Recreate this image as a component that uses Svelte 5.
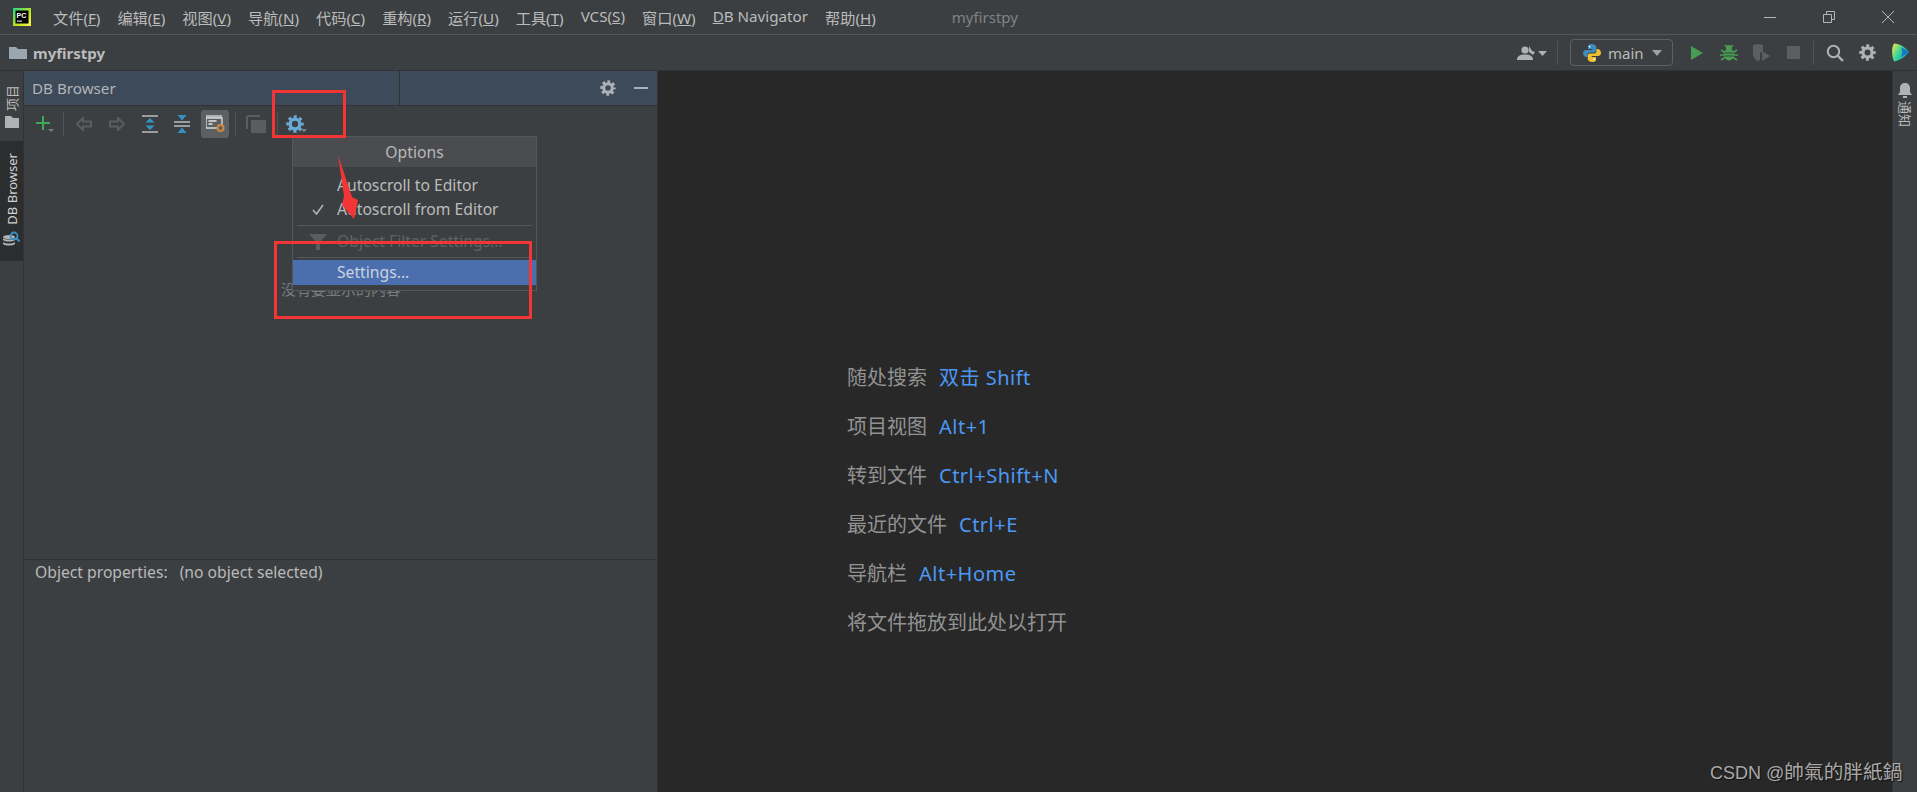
<script lang="ts">
  const menus = [
    ["文件(", "F", ")"],
    ["编辑(", "E", ")"],
    ["视图(", "V", ")"],
    ["导航(", "N", ")"],
    ["代码(", "C", ")"],
    ["重构(", "R", ")"],
    ["运行(", "U", ")"],
    ["工具(", "T", ")"],
    ["VCS(", "S", ")"],
    ["窗口(", "W", ")"],
    ["", "D", "B Navigator"],
    ["帮助(", "H", ")"]
  ];

  const hints = [
    { label: "随处搜索", key: "双击 Shift" },
    { label: "项目视图", key: "Alt+1" },
    { label: "转到文件", key: "Ctrl+Shift+N" },
    { label: "最近的文件", key: "Ctrl+E" },
    { label: "导航栏", key: "Alt+Home" },
    { label: "将文件拖放到此处以打开", key: "" }
  ];
</script>

{#snippet gear(size: number, color: string)}
  <svg class="gear" viewBox="2 2 20 20" width={size} height={size}>
    <circle cx="12" cy="12" r="5.4" fill="none" stroke={color} stroke-width="3.800" />
    <circle cx="12" cy="12" r="8" fill="none" stroke={color} stroke-width="3.400" stroke-dasharray="3.400 2.883" stroke-dashoffset="1.700" />
  </svg>
{/snippet}

<div class="ide">
  <header class="titlebar">
    <svg class="logo" viewBox="0 0 18 18" width="18" height="18">
      <defs>
        <linearGradient id="pc" x1="0" y1="0" x2="1" y2="1">
          <stop offset="0" stop-color="#21d789" />
          <stop offset="0.6" stop-color="#c6e21c" />
          <stop offset="1" stop-color="#fcf84a" />
        </linearGradient>
      </defs>
      <rect width="18" height="18" fill="url(#pc)" />
      <rect x="2.500" y="2.500" width="13" height="13" fill="#000" />
      <text x="3.500" y="9.500" class="logo-text">PC</text>
      <rect x="4" y="12.600" width="5" height="1" fill="#fff" />
    </svg>
    <nav class="menus">
      {#each menus as [a, k, b]}
        <span>{a}<u>{k}</u>{b}</span>
      {/each}
    </nav>
    <span class="wintitle">myfirstpy</span>
    <div class="winctl">
      <svg viewBox="0 0 14 14" width="14" height="14"><path d="M1 7.500h12" stroke="#b5b5b5" fill="none" /></svg>
      <svg viewBox="0 0 14 14" width="14" height="14"><path d="M1.500 4.500h8v8h-8zM4.500 4V1.500h8v8H10" stroke="#b5b5b5" fill="none" /></svg>
      <svg viewBox="0 0 14 14" width="14" height="14"><path d="M1 1l12 12M13 1L1 13" stroke="#b5b5b5" fill="none" /></svg>
    </div>
  </header>

  <div class="navbar">
    <div class="crumb">
      <svg viewBox="0 0 18 16" width="18" height="16"><path d="M0 2h7l2 2h9v10H0z" fill="#9aa7b0" /></svg>
      <strong>myfirstpy</strong>
    </div>
    <div class="nav-actions">
      <svg viewBox="0 0 32 16" width="32" height="16">
        <circle cx="8" cy="5" r="3.600" fill="#afb1b3" />
        <path d="M0 15c0-4 3-5.500 8-5.500s8 1.500 8 5.500z" fill="#afb1b3" />
        <path d="M12 1l3 5 3 1-2 3-4-3z" fill="#afb1b3" />
        <path d="M21 6h9l-4.500 5z" fill="#afb1b3" />
      </svg>
      <i class="vsep s1"></i>
      <div class="runcfg">
        <svg viewBox="0 0 18 18" width="18" height="18">
          <path d="M9 0C5 0 5 2 5 3v2h4.300v1H3C1 6 0 7.500 0 9s1 4 3 4h1.500v-2c0-1.500 1-2.600 2.600-2.600h4c1.300 0 2.200-1 2.200-2.200V3c0-1.500-1.800-3-4.300-3z" fill="#3c8dbc" />
          <path d="M9 18c4 0 4-2 4-3v-2H8.700v-1H15c2 0 3-1.500 3-3s-1-4-3-4h-1.500v2c0 1.500-1 2.600-2.600 2.600h-4C5.600 9.600 4.700 10.600 4.700 11.800V15c0 1.500 1.800 3 4.300 3z" fill="#f0c030" />
          <circle cx="6.700" cy="2.600" r=".9" fill="#fff" />
          <circle cx="11.300" cy="15.400" r=".9" fill="#fff" />
        </svg>
        <span>main</span>
        <svg viewBox="0 0 12 8" width="12" height="8"><path d="M1 1h10L6 7z" fill="#9da0a2" /></svg>
      </div>
      <svg class="run" viewBox="0 0 12 14" width="12" height="14"><path d="M0 0l12 7-12 7z" fill="#499c54" /></svg>
      <svg class="bug" viewBox="0 0 18 18" width="18" height="18">
        <ellipse cx="9" cy="10.500" rx="5" ry="6" fill="#499c54" />
        <circle cx="9" cy="4" r="3" fill="#499c54" />
        <path d="M1 6l4 2.500M17 6l-4 2.500M0 11h5M18 11h-5M1 16l4-2.500M17 16l-4-2.500M5 1l2 2M13 1l-2 2" stroke="#499c54" stroke-width="1.500" />
        <path d="M5 9h8M5 12h8" stroke="#3c3f41" />
      </svg>
      <svg class="cover" viewBox="0 0 20 20" width="20" height="20">
        <path d="M1 2l5-1 5 1v6l-3 2v7l-2 1C3 17 1 14 1 10z" fill="#5c5f61" />
        <path d="M10 8l8 5-8 5z" fill="#5c5f61" />
      </svg>
      <svg viewBox="0 0 13 13" width="13" height="13"><rect width="13" height="13" fill="#5c5f61" /></svg>
      <i class="vsep s2"></i>
      <svg class="search" viewBox="0 0 18 18" width="18" height="18"><circle cx="7.500" cy="7.500" r="5.700" fill="none" stroke="#afb1b3" stroke-width="2" /><path d="M11.500 11.500L17 17" stroke="#afb1b3" stroke-width="2.400" /></svg>
      <span class="nav-gear">{@render gear(17, "#afb1b3")}</span>
      <svg viewBox="0 0 18 19" width="18" height="19">
        <defs>
          <linearGradient id="tb" x1="0" y1="0" x2="1" y2="0.600">
            <stop offset="0" stop-color="#f6e64a" />
            <stop offset="0.55" stop-color="#34d399" />
            <stop offset="1" stop-color="#18a0c8" />
          </linearGradient>
        </defs>
        <path d="M3 0.500C9 1 14 4 18 9c-4 5-9 8.500-15 9.500C1 14 0 5 3 0.500z" fill="url(#tb)" />
        <path d="M10 4.500c3 1.300 5.500 2.800 8 4.500-2.500 2-5 3.500-8 5 1.500-3 1.500-6.500 0-9.500z" fill="#1778c4" />
      </svg>
    </div>
  </div>

  <div class="workspace">
    <aside class="stripe left">
      <div class="stripe-top">
        <span class="vtext">项目</span>
        <svg viewBox="0 0 14 12" width="14" height="12"><path d="M0 0h6l2 2h6v10H0z" fill="#afb1b3" /></svg>
      </div>
      <div class="stripe-tab">
        <span class="vtext">DB Browser</span>
        <svg viewBox="0 0 17 16" width="17" height="16">
          <ellipse cx="6" cy="6" rx="6" ry="2" fill="#afb1b3" />
          <path d="M0 7c2 2 10 2 12 0v2c-2 2-10 2-12 0zM0 11c2 2 10 2 12 0v2c-2 2-10 2-12 0z" fill="#afb1b3" />
          <circle cx="11" cy="5" r="3.500" fill="none" stroke="#3592c4" stroke-width="1.800" />
          <path d="M13.500 7.500l3 3" stroke="#3592c4" stroke-width="2" />
        </svg>
      </div>
    </aside>

    <section class="panel">
      <div class="panel-head">
        <span class="panel-title">DB Browser</span>
        <i class="head-sep"></i>
        <div class="head-actions">
          {@render gear(16, "#afb1b3")}
          <svg viewBox="0 0 14 14" width="14" height="14"><path d="M0 7h14" stroke="#afb1b3" stroke-width="2" /></svg>
        </div>
      </div>

      <div class="toolbar">
        <svg class="plus" viewBox="0 0 20 18" width="20" height="18">
          <path d="M8 1v14M1 8h14" stroke="#3fa757" stroke-width="2" />
          <path d="M13 14h6l-3 3z" fill="#7a7d80" />
        </svg>
        <i class="tsep t1"></i>
        <svg class="mr17" viewBox="0 0 16 14" width="16" height="14"><path d="M7 1L1 7l6 6V9.500h8v-5H7z" fill="none" stroke="#5a5d5f" stroke-width="2" /></svg>
        <svg class="mr17" viewBox="0 0 16 14" width="16" height="14"><path d="M9 1l6 6-6 6V9.500H1v-5h8z" fill="none" stroke="#5a5d5f" stroke-width="2" /></svg>
        <svg class="mr16" viewBox="0 0 16 18" width="16" height="18">
          <path d="M0 1h16M0 17h16" stroke="#9a9c9e" stroke-width="2" />
          <path d="M8 3l4.500 4.500h-9zM8 15l-4.500-4.500h9z" fill="#3592c4" />
        </svg>
        <svg class="mr11" viewBox="0 0 16 18" width="16" height="18">
          <path d="M0 7h16M0 11h16" stroke="#9a9c9e" stroke-width="2" />
          <path d="M8 5.500L3.500 0h9zM8 12.500L12.500 18h-9z" fill="#3592c4" />
        </svg>
        <div class="tb-on">
          <svg viewBox="0 0 19 18" width="19" height="18">
            <path d="M0 0h16v3H0z" fill="#afb1b3" />
            <path d="M0 3h16v10H0z" fill="none" stroke="#d5d7d9" stroke-width="1.400" />
            <path d="M2.500 6h8M2.500 9h4" stroke="#e6e6e6" stroke-width="1.600" />
            <circle cx="14.500" cy="13" r="3" fill="#5d5f61" stroke="#c98a3c" stroke-width="2" />
          </svg>
        </div>
        <i class="tsep t2"></i>
        <svg class="mr11" viewBox="0 0 20 18" width="20" height="18">
          <path d="M1 14V2a1 1 0 011-1h12" fill="none" stroke="#5a5d5f" stroke-width="2" />
          <path d="M5 5h15v13H5z" fill="#5a5d5f" />
        </svg>
        <i class="tsep t3"></i>
        {@render gear(18, "#6aa9d6")}
        <svg class="caret" viewBox="0 0 6 4" width="6" height="4"><path d="M0 0h6L3 3.500z" fill="#7a7d80" /></svg>
      </div>

      <div class="tree">
        <p class="empty">没有要显示的内容</p>
      </div>

      <div class="props">Object properties:<span>(no object selected)</span></div>
    </section>

    <main class="editor">
      <ul class="hints">
        {#each hints as h}
          <li>{h.label}{#if h.key}<b>{h.key}</b>{/if}</li>
        {/each}
      </ul>
    </main>

    <aside class="stripe right">
      <svg viewBox="0 0 14 15" width="14" height="15"><path d="M7 0c3 0 5 2 5 5v4l2 3H0l2-3V5c0-3 2-5 5-5zM5 13h4v2H5z" fill="#afb1b3" /></svg>
      <span class="vtext-r">通知</span>
    </aside>
  </div>

  <!-- popup menu over the tool window -->
  <div class="popup">
    <div class="popup-head">Options</div>
    <div class="popup-item first">Autoscroll to Editor</div>
    <div class="popup-item">
      <svg class="check" viewBox="0 0 12 11" width="12" height="11"><path d="M1 6l3.500 4L11 1" fill="none" stroke="#afb1b3" stroke-width="1.600" /></svg>
      Autoscroll from Editor
    </div>
    <hr />
    <div class="popup-item off">
      <svg class="funnel" viewBox="0 0 18 16" width="18" height="16"><path d="M0 0h18l-7 8v8H7V8z" fill="#5a5d5f" /></svg>
      Object Filter Settings...
    </div>
    <hr class="last" />
    <div class="popup-item sel">Settings...</div>
  </div>

  <!-- annotations painted on the screenshot -->
  <div class="mark mark-gear"></div>
  <div class="mark mark-settings"></div>
  <svg class="arrow" viewBox="0 0 30 72" width="30" height="72"><path d="M5 5L19 47 25 50 21 69 9 55 11 46z" fill="#f33535" /></svg>

  <div class="watermark">CSDN @<span>帥氣的胖紙鍋</span></div>
</div>

<style>
  :global(body) {
    margin: 0;
    background: #3c3f41;
  }

  .ide {
    position: relative;
    width: 1917px;
    height: 792px;
    overflow: hidden;
    display: flex;
    flex-direction: column;
    background: #3c3f41;
    color: #bbbbbb;
    font-family: "Noto Sans", "Noto Sans CJK SC", sans-serif;
    font-size: 15.700px;
  }

  .titlebar {
    height: 34px;
    flex: none;
    display: flex;
    align-items: center;
    padding-left: 13px;
    border-bottom: 1px solid #555759;
  }

  .logo-text {
    font: bold 7px "Liberation Sans", sans-serif;
    fill: #fff;
  }

  .menus {
    display: flex;
    gap: 17px;
    margin-left: 22px;
    font-size: 15.200px;
    color: #bbbbbb;
  }

  .wintitle {
    margin-left: 76px;
    font-size: 15px;
    color: #808386;
  }

  .winctl {
    margin-left: auto;
    display: flex;
    gap: 45px;
    padding-right: 22px;
  }

  .navbar {
    height: 35px;
    flex: none;
    display: flex;
    align-items: center;
    justify-content: space-between;
    border-bottom: 1px solid #323232;
  }

  .crumb {
    display: flex;
    align-items: center;
    gap: 6px;
    padding-left: 9px;
  }

  .crumb strong {
    font-weight: 700;
    font-size: 15px;
  }

  .nav-actions {
    display: flex;
    align-items: center;
    padding-right: 8px;
  }

  .vsep {
    width: 1px;
    height: 24px;
    background: #515355;
  }

  .vsep.s1 {
    margin: 0 12px 0 8px;
  }

  .vsep.s2 {
    margin: 0 12px 0 13px;
  }

  .runcfg {
    width: 103px;
    height: 27px;
    box-sizing: border-box;
    display: flex;
    align-items: center;
    gap: 7px;
    padding-left: 12px;
    border: 1px solid #5e6163;
    border-radius: 4px;
    margin-right: 18px;
    font-size: 15px;
  }

  .run {
    margin-right: 17px;
  }

  .bug {
    margin-right: 14px;
  }

  .cover,
  .search {
    margin-right: 15px;
  }

  .nav-gear {
    display: flex;
    margin-right: 15px;
  }

  .workspace {
    flex: 1;
    min-height: 0;
    display: flex;
  }

  .stripe {
    flex: none;
    display: flex;
    flex-direction: column;
    align-items: center;
  }

  .stripe.left {
    width: 23px;
    border-right: 1px solid #323232;
  }

  .stripe-top {
    height: 70px;
    display: flex;
    flex-direction: column;
    align-items: center;
    gap: 5px;
    padding-top: 14px;
    box-sizing: border-box;
  }

  .vtext {
    writing-mode: vertical-rl;
    text-orientation: sideways;
    transform: rotate(180deg);
    font-size: 13px;
    line-height: 16px;
  }

  .stripe-tab {
    width: 100%;
    height: 120px;
    display: flex;
    flex-direction: column;
    align-items: center;
    gap: 6px;
    padding-top: 12px;
    box-sizing: border-box;
    background: #2b2d2f;
    color: #d0d0d0;
  }

  .panel {
    width: 633px;
    flex: none;
    display: flex;
    flex-direction: column;
    border-right: 1px solid #323232;
  }

  .panel-head {
    height: 34px;
    flex: none;
    display: flex;
    align-items: center;
    padding: 0 9px 0 8px;
    background: #3d4a59;
    border-bottom: 1px solid #323232;
    color: #b2b5b8;
  }

  .panel-title {
    width: 367px;
    font-size: 15.200px;
  }

  .head-sep {
    width: 1px;
    height: 100%;
    background: #323232;
  }

  .head-actions {
    margin-left: auto;
    display: flex;
    align-items: center;
    gap: 18px;
  }

  .toolbar {
    height: 35px;
    flex: none;
    display: flex;
    align-items: center;
    padding-left: 11px;
  }

  .plus {
    margin-right: 8px;
  }

  .mr17 {
    margin-right: 17px;
  }

  .mr16 {
    margin-right: 16px;
  }

  .mr11 {
    margin-right: 11px;
  }

  .tsep {
    width: 1px;
    height: 24px;
    background: #515355;
  }

  .tsep.t1 {
    margin-right: 12px;
  }

  .tsep.t2 {
    margin-right: 10px;
  }

  .tsep.t3 {
    margin-right: 8px;
  }

  .tb-on {
    width: 28px;
    height: 28px;
    display: grid;
    place-items: center;
    border-radius: 3px;
    background: #5d6062;
    margin-right: 6px;
  }

  .caret {
    margin: 14px 0 0 -3px;
  }

  .tree {
    flex: 1;
    min-height: 0;
    padding: 137px 0 0 257px;
    box-sizing: border-box;
  }

  .empty {
    margin: 0;
    font-size: 15px;
    line-height: 22px;
    color: #7a7d80;
  }

  .props {
    height: 28px;
    flex: none;
    padding: 1px 0 0 11px;
    margin-bottom: 203px;
    border-top: 1px solid #323232;
    color: #b9b9b9;
  }

  .props span {
    margin-left: 12px;
  }

  .editor {
    flex: 1;
    min-width: 0;
    background: #282828;
    padding-top: 293px;
    box-sizing: border-box;
  }

  .hints {
    list-style: none;
    margin: 0;
    padding: 0 0 0 189px;
    display: flex;
    flex-direction: column;
    gap: 21px;
    font-size: 20px;
    line-height: 28px;
    color: #929292;
  }

  .hints b {
    font-weight: 400;
    color: #4c98f5;
    margin-left: 12px;
    letter-spacing: 0.5px;
  }

  .stripe.right {
    width: 25px;
    padding-top: 12px;
    gap: 3px;
    box-sizing: border-box;
    border-left: 1px solid #323232;
  }

  .vtext-r {
    writing-mode: vertical-rl;
    text-orientation: sideways;
    font-size: 13px;
    line-height: 16px;
  }

  .popup {
    position: absolute;
    left: 292px;
    top: 136px;
    width: 245px;
    height: 155px;
    box-sizing: border-box;
    border: 1px solid #55585a;
    background: #3c3f41;
  }

  .popup-head {
    height: 30px;
    display: grid;
    place-items: center;
    background: #4a4c4f;
    color: #b9b9b9;
  }

  .popup-item {
    position: relative;
    height: 24px;
    line-height: 24px;
    padding-left: 44px;
    color: #bbbbbb;
  }

  .popup-item.first {
    margin-top: 6px;
  }

  .popup-item.off {
    color: #5f6265;
  }

  .popup-item.sel {
    height: 25px;
    line-height: 24px;
    background: #4b6eaf;
    color: #c9d2de;
  }

  .check {
    position: absolute;
    left: 19px;
    top: 7px;
  }

  .funnel {
    position: absolute;
    left: 16px;
    top: 5px;
  }

  .popup hr {
    margin: 4px 4px 3px;
    border: 0;
    height: 1px;
    background: #55585a;
  }

  .popup hr.last {
    margin-bottom: 2px;
  }

  .mark {
    position: absolute;
    box-sizing: border-box;
    border: 3px solid #f33535;
  }

  .mark-gear {
    left: 272px;
    top: 90px;
    width: 74px;
    height: 48px;
  }

  .mark-settings {
    left: 274px;
    top: 241px;
    width: 258px;
    height: 78px;
  }

  .arrow {
    position: absolute;
    left: 333px;
    top: 150px;
  }

  .watermark {
    position: absolute;
    left: 1710px;
    top: 756px;
    font: 18px "Liberation Sans", sans-serif;
    color: #a9a9a9;
    white-space: nowrap;
    text-shadow: 1px 1px 1px #111;
  }

  .watermark span {
    font: 19.700px "Noto Sans CJK TC", sans-serif;
  }
</style>
